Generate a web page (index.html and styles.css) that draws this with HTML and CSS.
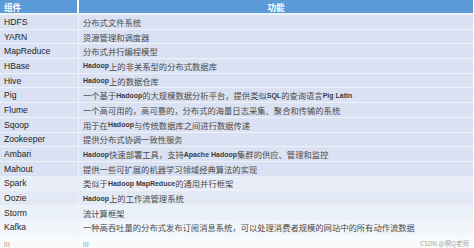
FILE: index.html
```html
<!DOCTYPE html>
<html lang="zh">
<head>
<meta charset="utf-8">
<link rel="stylesheet" href="styles.css">
</head>
<body>
<div class="table">
  <div class="row head"><div class="c1">组件</div><div class="c2">功能</div></div>
  <div class="row"><div class="c1">HDFS</div><div class="c2">分布式文件系统</div></div>
  <div class="row"><div class="c1">YARN</div><div class="c2">资源管理和调度器</div></div>
  <div class="row"><div class="c1">MapReduce</div><div class="c2">分布式并行编程模型</div></div>
  <div class="row"><div class="c1">HBase</div><div class="c2"><span class="en">Hadoop</span>上的非关系型的分布式数据库</div></div>
  <div class="row"><div class="c1">Hive</div><div class="c2"><span class="en">Hadoop</span>上的数据仓库</div></div>
  <div class="row"><div class="c1">Pig</div><div class="c2">一个基于<span class="en">Hadoop</span>的大规模数据分析平台，提供类似<span class="en">SQL</span>的查询语言<span class="en">Pig Latin</span></div></div>
  <div class="row"><div class="c1">Flume</div><div class="c2">一个高可用的，高可靠的，分布式的海量日志采集、聚合和传输的系统</div></div>
  <div class="row"><div class="c1">Sqoop</div><div class="c2">用于在<span class="en">Hadoop</span>与传统数据库之间进行数据传递</div></div>
  <div class="row"><div class="c1">Zookeeper</div><div class="c2">提供分布式协调一致性服务</div></div>
  <div class="row"><div class="c1">Ambari</div><div class="c2"><span class="en">Hadoop</span>快速部署工具，支持<span class="en">Apache Hadoop</span>集群的供应、管理和监控</div></div>
  <div class="row"><div class="c1">Mahout</div><div class="c2">提供一些可扩展的机器学习领域经典算法的实现</div></div>
  <div class="row r-spark"><div class="c1">Spark</div><div class="c2">类似于<span class="en">Hadoop MapReduce</span>的通用并行框架</div></div>
  <div class="row r-oozie"><div class="c1">Oozie</div><div class="c2"><span class="en">Hadoop</span>上的工作流管理系统</div></div>
  <div class="row r-storm"><div class="c1">Storm</div><div class="c2">流计算框架</div></div>
  <div class="row r-kafka"><div class="c1">Kafka</div><div class="c2">一种高吞吐量的分布式发布订阅消息系统，可以处理消费者规模的网站中的所有动作流数据</div></div>
  <div class="row r-last"><div class="c1 stub">|||</div><div class="c2 stub">|||</div></div>
  <div class="watermark">CSDN @啊Q老师</div>
</div>
</body>
</html>
```
FILE: styles.css
```css
html, body {
  margin: 0;
  padding: 0;
  background: #ffffff;
  width: 474px;
  height: 248px;
  overflow: hidden;
}
.table {
  position: relative;
  width: 473px;
  display: flex;
  flex-direction: column;
  gap: 1px;
  background: #eef2f9;
}
.row {
  display: grid;
  grid-template-columns: 78px 1fr;
  column-gap: 1px;
  height: 13.7px;
  background: #eef2f9;
}
.row > div {
  display: flex;
  align-items: center;
  background: #d9e1f2;
  white-space: nowrap;
  overflow: hidden;
}
.c1 {
  padding-left: 4px;
  font-family: "Liberation Sans", Arial, sans-serif;
  font-size: 8.6px;
  color: #1e1e1e;
}
.c2 {
  padding-left: 4px;
  font-family: "Noto Sans CJK SC", sans-serif;
  font-size: 8.3px;
  color: #4a4a4a;
}
.en {
  font-family: "Liberation Sans", Arial, sans-serif;
  font-size: 7px;
  font-weight: bold;
  color: #3a3a3a;
}
.row.head {
  height: 13px;
  margin-bottom: 1px;
  background: #ffffff;
}
.row.head > div {
  background: #5a9ad6;
  color: #ffffff;
  font-family: "Noto Sans CJK SC", sans-serif;
  font-weight: bold;
  font-size: 8.6px;
}
.row.head .c2 {
  justify-content: center;
  padding-left: 0;
}
.row.head .c1 {
  border-right: 1px solid #ffffff;
}
.r-spark > div { background: #e8eef8; }
.r-oozie > div { background: #e2e9f5; }
.r-storm > div { background: #eaf0f8; }
.r-kafka > div { background: #f2f6fa; }
.r-last { height: 12.5px; background: #f7f9fc; }
.r-last > div {
  background: #f8fafc;
  align-items: flex-end;
}
.stub {
  font-family: "Liberation Sans", Arial, sans-serif;
  font-size: 6px;
  line-height: 7px;
  color: #777;
  letter-spacing: 0.5px;
}
.watermark {
  position: absolute;
  right: 4px;
  bottom: 1px;
  font-family: "Noto Sans CJK SC", sans-serif;
  font-size: 6.5px;
  line-height: 8px;
  color: #a8a8a8;
}
```
